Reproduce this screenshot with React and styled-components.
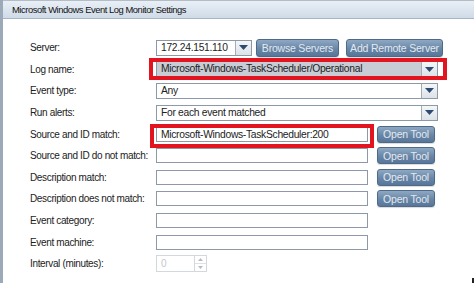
import React from "react";
import styled, { createGlobalStyle } from "styled-components";

const GlobalStyle = createGlobalStyle`
  html, body {
    margin: 0;
    padding: 0;
    background: #ffffff;
  }
  body {
    font-family: "Liberation Sans", Arial, sans-serif;
  }
`;

const Window = styled.div`
  position: relative;
  width: 474px;
  height: 283px;
  overflow: hidden;
  display: flex;
  flex-direction: column;
  border-left: 3px solid #9ba9b8;
  box-sizing: border-box;
  background: #ffffff;

  &::after {
    content: "";
    position: absolute;
    right: 0;
    bottom: 0;
    width: 2px;
    height: 5px;
    background: #222;
  }
`;

const TitleBar = styled.div`
  height: 17px;
  display: flex;
  align-items: center;
  padding-left: 9px;
  border-top: 1px solid #b4bcc6;
  border-bottom: 1px solid #a7b4c3;
  background: linear-gradient(#e9eff6, #cfdbe8);
  font-size: 9.4px;
  letter-spacing: -0.45px;
  color: #111;
`;

const Body = styled.div`
  flex: 1;
  padding: 18px 0 0 27px;
  font-size: 10px;
  letter-spacing: -0.35px;
  color: #222;
`;

const Row = styled.div`
  display: flex;
  align-items: center;
  height: 21.6px;
`;

const Label = styled.div`
  width: 126px;
  flex: none;
`;

const Field = styled.div`
  display: flex;
  align-items: center;
`;

const Combo = styled.div`
  width: ${(p) => p.$width}px;
  height: 16px;
  box-sizing: border-box;
  display: flex;
  border: 1px solid #8d99a6;
  background: ${(p) => (p.$selected ? "#c7ccd5" : "#ffffff")};
  font-size: 10.3px;
  letter-spacing: -0.3px;
`;

const ComboValue = styled.div`
  flex: 1;
  padding-left: 4px;
  line-height: 14px;
  white-space: nowrap;
  overflow: hidden;
`;

const ArrowButton = styled.div`
  width: 15px;
  flex: none;
  display: flex;
  align-items: center;
  justify-content: center;
  border-left: 1px solid #a3adb8;
  background: linear-gradient(#f4f6f8, #dde2e8);
`;

const TextInput = styled.div`
  width: ${(p) => p.$width || 212}px;
  height: 15px;
  box-sizing: border-box;
  border: 1px solid #8d99a6;
  background: #fff;
  padding-left: 4px;
  line-height: 13px;
  white-space: nowrap;
  font-size: 10.3px;
  letter-spacing: -0.3px;
`;

const ActionButton = styled.div`
  height: ${(p) => p.$height || 18}px;
  width: ${(p) => p.$width}px;
  margin-left: ${(p) => p.$gap || 0}px;
  box-sizing: border-box;
  display: flex;
  align-items: center;
  justify-content: center;
  border: 1px solid #4d6a88;
  border-radius: 3px;
  background: linear-gradient(#8ea8c3, #6886a6 55%, #57769a);
  color: #e3e9f0;
  font-size: 10.5px;
  letter-spacing: -0.2px;
  box-shadow: 0 1px 1px rgba(0, 0, 0, 0.15);
`;

const Highlight = styled.div`
  position: relative;

  &::after {
    content: "";
    position: absolute;
    top: -3px;
    bottom: ${(p) => p.$bottom}px;
    left: ${(p) => p.$left}px;
    right: ${(p) => p.$right}px;
    border: 4px solid #e1141f;
    pointer-events: none;
  }
`;

const Spinner = styled.div`
  width: 51px;
  height: 17px;
  box-sizing: border-box;
  display: flex;
  border: 1px solid #d3d8dd;
  color: #c3c7cc;
`;

const SpinValue = styled.div`
  flex: 1;
  padding-left: 4px;
  line-height: 15px;
`;

const SpinButtons = styled.div`
  width: 11px;
  display: flex;
  flex-direction: column;
  border-left: 1px solid #d3d8dd;
`;

const SpinHalf = styled.div`
  flex: 1;
  display: flex;
  align-items: center;
  justify-content: center;
  border-top: ${(p) => (p.$lower ? "1px solid #dde1e5" : "none")};
`;

const DownArrow = () => (
  <svg width="9" height="5" viewBox="0 0 9 5">
    <path d="M0 0 H9 L4.5 5 Z" fill="#2b4b72" />
  </svg>
);

const Tiny = ({ up }) => (
  <svg width="5" height="3" viewBox="0 0 5 3">
    <path d={up ? "M0 3 H5 L2.5 0 Z" : "M0 0 H5 L2.5 3 Z"} fill="#b6bcc3" />
  </svg>
);

const ComboBox = ({ width, value, selected }) => (
  <Combo $width={width} $selected={selected}>
    <ComboValue>{value}</ComboValue>
    <ArrowButton>
      <DownArrow />
    </ArrowButton>
  </Combo>
);

export default function App() {
  return (
    <>
      <GlobalStyle />
      <Window>
        <TitleBar>Microsoft Windows Event Log Monitor Settings</TitleBar>
        <Body>
          <Row>
            <Label>Server:</Label>
            <Field>
              <ComboBox width={96} value="172.24.151.110" />
              <ActionButton $width={83} $gap={4}>Browse Servers</ActionButton>
              <ActionButton $width={97} $gap={7}>Add Remote Server</ActionButton>
            </Field>
          </Row>
          <Row>
            <Label>Log name:</Label>
            <Highlight $left={-7} $right={-9} $bottom={-3}>
              <ComboBox
                width={282}
                selected
                value="Microsoft-Windows-TaskScheduler/Operational"
              />
            </Highlight>
          </Row>
          <Row>
            <Label>Event type:</Label>
            <ComboBox width={282} value="Any" />
          </Row>
          <Row>
            <Label>Run alerts:</Label>
            <ComboBox width={282} value="For each event matched" />
          </Row>
          <Row>
            <Label>Source and ID match:</Label>
            <Field>
              <Highlight $left={-6} $right={-6} $bottom={-6}>
                <TextInput>Microsoft-Windows-TaskScheduler:200</TextInput>
              </Highlight>
              <ActionButton $width={58} $height={17} $gap={9}>Open Tool</ActionButton>
            </Field>
          </Row>
          <Row>
            <Label>Source and ID do not match:</Label>
            <Field>
              <TextInput />
              <ActionButton $width={58} $height={17} $gap={9}>Open Tool</ActionButton>
            </Field>
          </Row>
          <Row>
            <Label>Description match:</Label>
            <Field>
              <TextInput />
              <ActionButton $width={58} $height={17} $gap={9}>Open Tool</ActionButton>
            </Field>
          </Row>
          <Row>
            <Label>Description does not match:</Label>
            <Field>
              <TextInput />
              <ActionButton $width={58} $height={17} $gap={9}>Open Tool</ActionButton>
            </Field>
          </Row>
          <Row>
            <Label>Event category:</Label>
            <TextInput />
          </Row>
          <Row>
            <Label>Event machine:</Label>
            <TextInput />
          </Row>
          <Row>
            <Label>Interval (minutes):</Label>
            <Spinner>
              <SpinValue>0</SpinValue>
              <SpinButtons>
                <SpinHalf>
                  <Tiny up />
                </SpinHalf>
                <SpinHalf $lower>
                  <Tiny />
                </SpinHalf>
              </SpinButtons>
            </Spinner>
          </Row>
        </Body>
      </Window>
    </>
  );
}
